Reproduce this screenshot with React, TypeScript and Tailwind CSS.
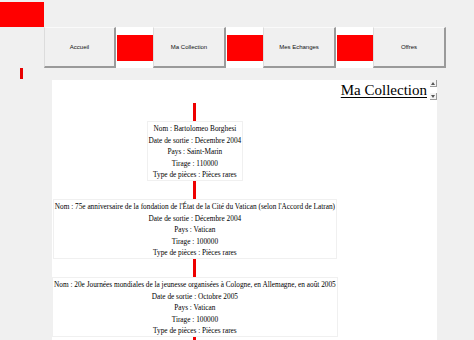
import React from "react";

const coins = [
  { nom: "Bartolomeo Borghesi", date: "Décembre 2004", pays: "Saint-Marin", tirage: "110000", type: "Pièces rares" },
  { nom: "75e anniversaire de la fondation de l'État de la Cité du Vatican (selon l'Accord de Latran)", date: "Décembre 2004", pays: "Vatican", tirage: "100000", type: "Pièces rares" },
  { nom: "20e Journées mondiales de la jeunesse organisées à Cologne, en Allemagne, en août 2005", date: "Octobre 2005", pays: "Vatican", tirage: "100000", type: "Pièces rares" },
];

const tabs = ["Accueil", "Ma Collection", "Mes Echanges", "Offres"];

function Spin({ up }: { up?: boolean }) {
  return (
    <span className="grid h-[7px] w-[7px] place-items-center border-r border-b border-[#9a9a9a] bg-[#f4f4f4]">
      <svg width="4" height="3" viewBox="0 0 4 3">
        <path d={up ? "M0 3 L2 0 L4 3 Z" : "M0 0 L4 0 L2 3 Z"} fill="#555" />
      </svg>
    </span>
  );
}

export default function App() {
  return (
    <div className="min-h-screen overflow-hidden bg-[#f0f0f0] font-['Liberation_Serif',serif] text-black">
      <div className="pt-[2px]"><div className="h-[25px] w-[44px] bg-[#ff0000]" /></div>

      <nav className="flex h-[41px] pl-[44px] font-['Liberation_Sans',Arial,sans-serif]">
        {tabs.map((t, i) => (
          <React.Fragment key={t}>
            <button className={`${i === 0 ? "w-[72px]" : "w-[73px]"} box-border h-full border-t border-l border-r-2 border-b-2 border-t-[#fafafa] border-l-[#dcdcdc] border-r-[#9a9a9a] border-b-[#9a9a9a] bg-[#f0f0f0] text-[6px] text-[#111]`}>
              {t}
            </button>
            {i < 3 && (
              <div className="w-[37px] bg-white pt-[8px] pb-[7px] pl-[1px]">
                <div className="h-full bg-[#ff0000]" />
              </div>
            )}
          </React.Fragment>
        ))}
      </nav>

      <div className="mb-[1px] ml-[20px] h-[11px] w-[3px] bg-[#e80000]" />

      <main className="ml-[52px] min-h-[260px] w-[385px] bg-white">
        <div className="flex h-[23px] justify-end">
          <h1 className="pt-[1px] text-[15px] leading-[18px] underline decoration-1 underline-offset-2">Ma Collection</h1>
          <div className="ml-[3px] flex flex-col justify-between pb-[3px]">
            <Spin up />
            <Spin />
          </div>
        </div>

        <div className="inline-flex flex-col items-center">
          {coins.map((c) => (
            <React.Fragment key={c.nom}>
              <div className="h-[18px] w-[3px] bg-[#ee0000]" />
              <div className="box-border h-[60px] border border-[#f0f0f0] bg-white px-[1px] pt-[1px] text-center text-[7.3px] leading-[11.6px] whitespace-nowrap">
                <p>Nom : {c.nom}</p>
                <p>Date de sortie : {c.date}</p>
                <p>Pays : {c.pays}</p>
                <p>Tirage : {c.tirage}</p>
                <p>Type de pièces : {c.type}</p>
              </div>
            </React.Fragment>
          ))}
          <div className="h-[18px] w-[3px] bg-[#ee0000]" />
        </div>
      </main>
    </div>
  );
}
